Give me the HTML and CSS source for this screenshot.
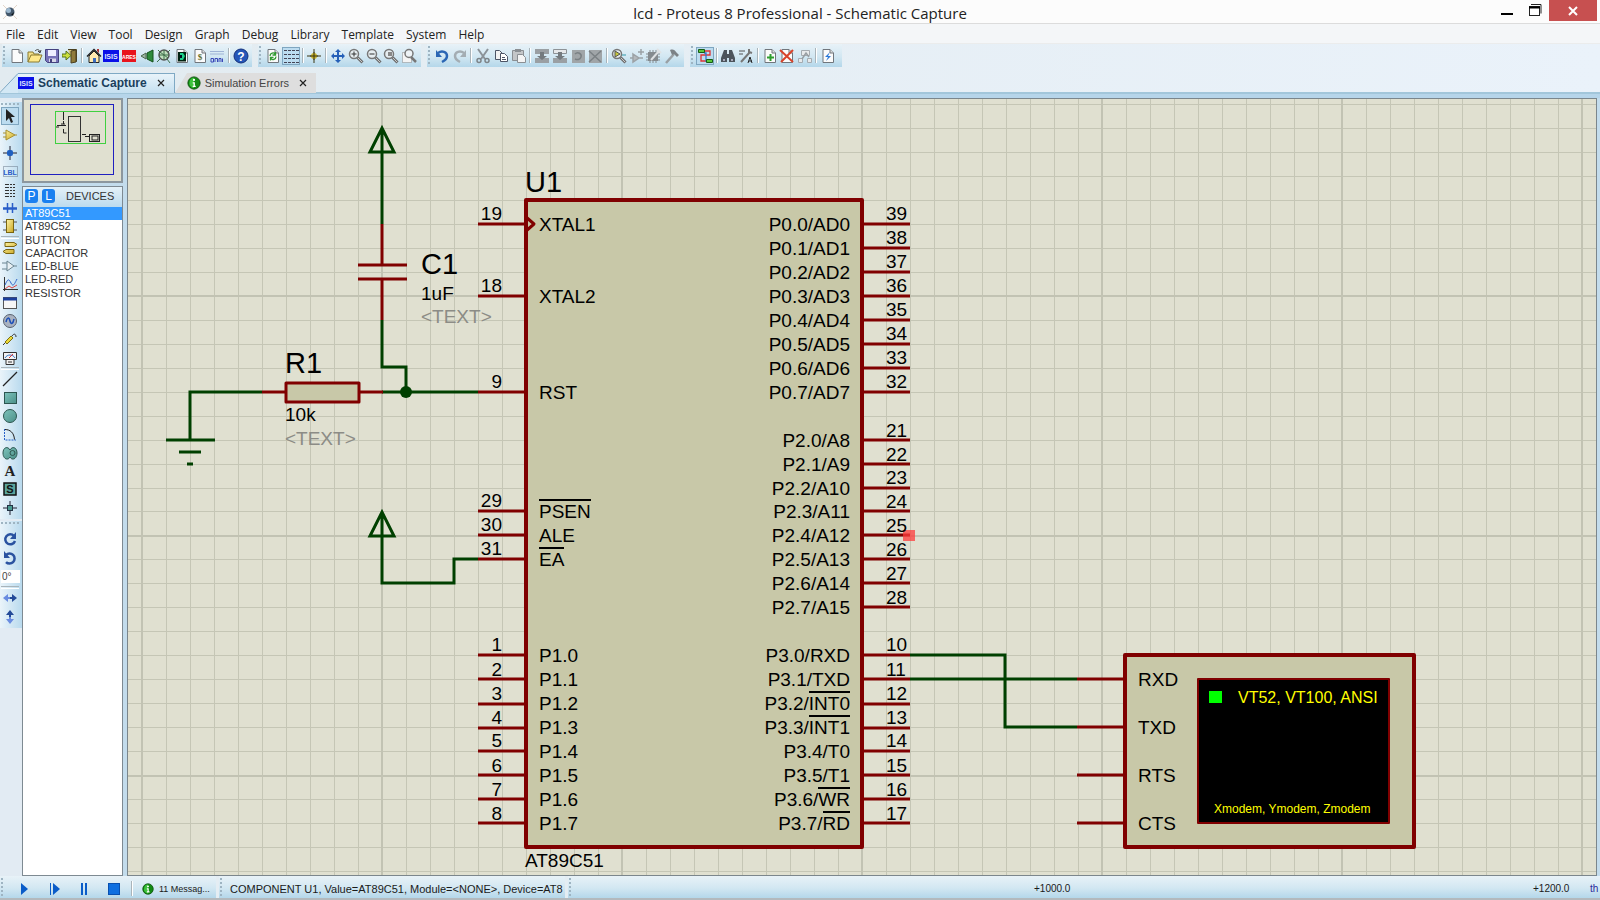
FILE: index.html
```html
<!DOCTYPE html>
<html lang="en">
<head>
<meta charset="utf-8">
<title>lcd - Proteus 8 Professional - Schematic Capture</title>
<link rel="stylesheet" href="styles.css">
</head>
<body>
<svg class="defs" width="0" height="0" aria-hidden="true">
  <defs>
    <linearGradient id="gold" x1="0" y1="0" x2="1" y2="1"><stop offset="0" stop-color="#fff6a8"/><stop offset="1" stop-color="#c9a520"/></linearGradient>
    <linearGradient id="teal" x1="0" y1="0" x2="1" y2="1"><stop offset="0" stop-color="#7fc4bc"/><stop offset="1" stop-color="#4a8f88"/></linearGradient>
    <symbol id="isis" viewBox="0 0 16 16"><rect x="0" y="2" width="16" height="12" fill="#0a10e8"/><text x="8" y="11" class="t-logo" fill="#dfe4ff">ISIS</text></symbol>
    <symbol id="info" viewBox="0 0 16 16"><circle cx="8" cy="8" r="7" fill="#128a12" stroke="#0a4d0a"/><path d="M3 6a5.500 5.500 0 0 1 5-4v12a6 6 0 0 1-5-8z" fill="#3cc23c"/><circle cx="8" cy="4.500" r="1.300" fill="#fff"/><path d="M6.500 7H9v4h1v1.500H6.500V11h1V8.500h-1z" fill="#fff"/></symbol>
    <symbol id="page" viewBox="0 0 16 16"><path d="M3 1.500h7l3.500 3.500v9.500H3z" fill="#fbfbfb" stroke="#70767c"/><path d="M10 1.500V5h3.500" fill="#ddd" stroke="#70767c"/></symbol>
    <symbol id="lens" viewBox="0 0 16 16"><path d="M9.500 9.500l5 5" stroke="#6e6e6e" stroke-width="3"/><path d="M10 10l4 4" stroke="#c9c9c9"/><circle cx="6" cy="6" r="4.500" fill="#e6edf0" stroke="#777" stroke-width="1.500"/></symbol>
  </defs>
</svg>

<div class="app">
<header class="titlebar">
  <svg class="ic app-icon" viewBox="0 0 16 16"><path d="M1 1l4 4M15 1l-4 4M1 15l4-4M15 15l-4-4" stroke="#e3d5c8"/><circle cx="8" cy="8" r="4.500" fill="#42566a"/><circle cx="6.500" cy="6.500" r="2.500" fill="#9cb8cf"/><path d="M9 11l3-3-1 3z" fill="#111"/></svg>
  <h1 class="title">lcd - Proteus 8 Professional - Schematic Capture</h1>
  <div class="winbtns">
    <button class="win" aria-label="Minimize"><svg width="14" height="14" viewBox="0 0 14 14"><path d="M1 11h12" stroke="#000" stroke-width="2"/></svg></button>
    <button class="win" aria-label="Restore"><svg width="14" height="14" viewBox="0 0 14 14"><path d="M3 1.500h10v9" fill="none" stroke="#222" /><rect x="1.500" y="3.500" width="10" height="9" fill="#fff" stroke="#222"/><path d="M1 4.500h11" stroke="#000" stroke-width="2"/></svg></button>
    <button class="win close" aria-label="Close"><svg width="10" height="10" viewBox="0 0 10 10"><path d="M1 1l8 8M9 1l-8 8" stroke="#fff" stroke-width="2"/></svg></button>
  </div>
</header>

<nav class="menu">
  <button>File</button><button>Edit</button><button>View</button><button>Tool</button><button>Design</button><button>Graph</button><button>Debug</button><button>Library</button><button>Template</button><button>System</button><button>Help</button>
</nav>

<div class="toolbars">
  <div class="strip s-file">
    <button class="tb" aria-label="New"><svg class="ic"><use href="#page"/></svg></button>
    <button class="tb" aria-label="Open"><svg class="ic" viewBox="0 0 16 16"><path d="M1 14V4h5l1 2h5v3" fill="#f3e08a" stroke="#8a7a30"/><path d="M1 14l3-7h11l-3 7z" fill="#ffe98a" stroke="#8a7a30"/><path d="M8 3c2-2 4-2 5 1m1-2l-1 3-2-2" fill="none" stroke="#444"/></svg></button>
    <button class="tb" aria-label="Save"><svg class="ic" viewBox="0 0 16 16"><path d="M1.500 1.500h13v13h-11l-2-2z" fill="#7672b8" stroke="#44407e"/><path d="M4 2h8v6H4z" fill="#eef"/><path d="M5 10.500h7V14H5z" fill="#d7d7e8"/><path d="M6 11h2v3H6z" fill="#44407e"/></svg></button>
    <button class="tb" aria-label="Close project"><svg class="ic" viewBox="0 0 16 16"><path d="M6 1.500h8.500v12H10" fill="#d8c67b" stroke="#4a4020"/><path d="M9 3l5-1v12l-5 1z" fill="#8f7a3a" stroke="#4a4020"/><path d="M0 6h4V3l5 4.500L4 12V9H0z" fill="#cbe03c" stroke="#56701a"/></svg></button>
    <i class="sep"></i>
    <button class="tb" aria-label="Home"><svg class="ic" viewBox="0 0 16 16"><path d="M3 8v6.500h10V8L8 3z" fill="#ffe9b0" stroke="#222"/><path d="M1 8.500l7-7 7 7" fill="none" stroke="#222" stroke-width="1.500"/><path d="M11 1h2v4l-2-2z" fill="#a33"/><path d="M7 10h3v4.500H7z" fill="#3b6cc0"/></svg></button>
    <button class="tb" aria-label="Schematic capture"><svg class="ic"><use href="#isis"/></svg></button>
    <button class="tb" aria-label="PCB layout"><svg class="ic" viewBox="0 0 16 16"><rect x="1" y="2" width="14" height="12" fill="#e8141c"/><text x="8" y="11" class="t-logo s" fill="#fff">ARES</text></svg></button>
    <button class="tb" aria-label="3D viewer"><svg class="ic" viewBox="0 0 16 16"><path d="M8 5l6-3v12l-6-3z" fill="#2f8b3c" stroke="#14521c"/><path d="M2 8l5-3v6z" fill="#9db5a0" stroke="#4c6950"/></svg></button>
    <button class="tb" aria-label="Gerber viewer"><svg class="ic" viewBox="0 0 16 16"><circle cx="8" cy="7" r="5" fill="#bfe0bd" stroke="#555" stroke-width="1.500"/><path d="M3 7h10M8 2v10M4 4l8 6M1 14l3-3M14 15l-3-4M2 2l2 2M14 2l-2 2" stroke="#3e6f4a"/></svg></button>
    <button class="tb" aria-label="Design explorer"><svg class="ic"><use href="#page"/></svg><svg class="ic over" viewBox="0 0 16 16"><path d="M4 4h8v9.500H4z" fill="#021"/><path d="M6 5h3l2 3-2 4H6z" fill="#1fd08a"/><path d="M6 7h2v3H6z" fill="#012"/></svg></button>
    <button class="tb" aria-label="Bill of materials"><svg class="ic"><use href="#page"/></svg><svg class="ic over" viewBox="0 0 16 16"><text x="8" y="12" class="t-bom">$</text></svg></button>
    <button class="tb" aria-label="Source code"><svg class="ic" viewBox="0 0 16 16"><path d="M1 3.500h14M1 6h14" stroke="#9fb4d6"/><path d="M2 14v-3.500h2.500V14zM6 14v-3.500h2.500V14M10 14v-3.500h2V14M13.500 14v-3.500" fill="none" stroke="#3a49b8"/></svg></button>
    <i class="sep"></i>
    <button class="tb" aria-label="Help"><svg class="ic" viewBox="0 0 16 16"><circle cx="8" cy="8" r="7" fill="#2456b8" stroke="#13307a"/><text x="8" y="12.500" class="t-help">?</text></svg></button>
  </div>

  <div class="strip s-view">
    <button class="tb" aria-label="Redraw"><svg class="ic"><use href="#page"/></svg><svg class="ic over" viewBox="0 0 16 16"><path d="M5 8c0-3 4-4 5-2m.5-2v3h-3M11 8.500c0 3-4 4-5 2m-.5 2v-3h3" fill="none" stroke="#2f9a2f" stroke-width="1.300"/></svg></button>
    <button class="tb on" aria-label="Toggle grid"><svg class="ic" viewBox="0 0 16 16"><path d="M1 2.500h15M1 6.500h15M1 10.500h15M1 14.500h15" stroke="#445" stroke-dasharray="1 1"/><path d="M2.500 2v14M6.500 2v14M10.500 2v14M14.500 2v14" stroke="#445" stroke-dasharray="1 3"/></svg></button>
    <i class="sep"></i>
    <button class="tb" aria-label="Origin"><svg class="ic" viewBox="0 0 16 16"><path d="M8 1v14M1 8h14" stroke="#3a3612"/><circle cx="8" cy="8" r="3" fill="#c9b22a"/><path d="M8 4v8M4 8h8" stroke="#3a3612"/></svg></button>
    <i class="sep"></i>
    <button class="tb" aria-label="Pan"><svg class="ic" viewBox="0 0 16 16"><path d="M8 1l3 3H9v3h3V5l3 3-3 3V9H9v3h2l-3 3-3-3h2V9H4v2L1 8l3-3v2h3V4H5z" fill="#2560b8"/></svg></button>
    <button class="tb" aria-label="Zoom in"><svg class="ic"><use href="#lens"/></svg><svg class="ic over" viewBox="0 0 16 16"><path d="M6 3.500v5M3.500 6h5" stroke="#333"/></svg></button>
    <button class="tb" aria-label="Zoom out"><svg class="ic"><use href="#lens"/></svg><svg class="ic over" viewBox="0 0 16 16"><path d="M3.500 6h5" stroke="#333"/></svg></button>
    <button class="tb" aria-label="Zoom all"><svg class="ic"><use href="#lens"/></svg><svg class="ic over" viewBox="0 0 16 16"><path d="M4 4h4v4H4z" fill="#888"/></svg></button>
    <button class="tb" aria-label="Zoom area"><svg class="ic" viewBox="0 0 16 16"><rect x="1.500" y="4.500" width="9" height="10" fill="#f4f4f4" stroke="#888" stroke-dasharray="1 1"/><path d="M10 9l5 5" stroke="#777" stroke-width="2.500"/><circle cx="8" cy="5.500" r="4" fill="#eef3f6" stroke="#777" stroke-width="1.500"/></svg></button>
  </div>

  <div class="strip s-edit">
    <button class="tb" aria-label="Undo"><svg class="ic" viewBox="0 0 16 16"><path d="M4 5c4-3 9-1 9 3 0 3-3 5-5 6" fill="none" stroke="#2b66b4" stroke-width="2.500"/><path d="M2 2v7h6z" fill="#2b66b4"/></svg></button>
    <button class="tb" aria-label="Redo"><svg class="ic" viewBox="0 0 16 16"><path d="M12 5C8 2 3 4 3 8c0 3 3 5 5 6" fill="none" stroke="#a4adb3" stroke-width="2.500"/><path d="M14 2v7H8z" fill="#a4adb3"/></svg></button>
    <i class="sep"></i>
    <button class="tb" aria-label="Cut"><svg class="ic" viewBox="0 0 16 16"><path d="M3 1l7 10M13 1L6 11" stroke="#8c9399" stroke-width="2"/><circle cx="4" cy="12.500" r="2" fill="none" stroke="#7d8489" stroke-width="1.500"/><circle cx="12" cy="12.500" r="2" fill="none" stroke="#7d8489" stroke-width="1.500"/></svg></button>
    <button class="tb" aria-label="Copy"><svg class="ic" viewBox="0 0 16 16"><path d="M2.500 2.500h4l3 3v6h-7z" fill="#f2f2f2" stroke="#4d5566"/><path d="M7.500 5.500h4l3 3v5h-7z" fill="#fff" stroke="#4d5566"/><path d="M9 9.500h3M9 11.500h4" stroke="#4d5566"/></svg></button>
    <button class="tb" aria-label="Paste"><svg class="ic" viewBox="0 0 16 16"><path d="M1.500 2.500h11v10h-11z" fill="#c4c6c8" stroke="#8b8f93"/><path d="M4 1h6v3H4z" fill="#8b8f93"/><path d="M6.500 6.500h5l3 3v5h-8z" fill="#f4f4f4" stroke="#8b8f93"/></svg></button>
    <i class="sep"></i>
    <button class="tb" aria-label="Block copy"><svg class="ic" viewBox="0 0 16 16"><path d="M1 1h14v5H1zM1 10h14v5H1z" fill="#9a9fa3"/><path d="M6 4h4v4h3l-5 4-5-4h3z" fill="#747a7e"/></svg></button>
    <button class="tb" aria-label="Block move"><svg class="ic" viewBox="0 0 16 16"><path d="M1.500 1.500h13v4h-13z" fill="#e6e8ea" stroke="#8d9296"/><path d="M1 10h14v5H1z" fill="#9a9fa3"/><path d="M6 4h4v4h3l-5 4-5-4h3z" fill="#747a7e"/></svg></button>
    <button class="tb" aria-label="Block rotate"><svg class="ic" viewBox="0 0 16 16"><path d="M2 2h13v13H2z" fill="#a0a5a8"/><path d="M5 6c3-3 7 0 6 3s-4 3-6 2" fill="none" stroke="#7a8084" stroke-width="1.500"/></svg></button>
    <button class="tb" aria-label="Block delete"><svg class="ic" viewBox="0 0 16 16"><path d="M2 2h13v13H2z" fill="#a0a5a8"/><path d="M2 3l12 11M14 3L2 14" stroke="#7a8084" stroke-width="1.500"/></svg></button>
    <i class="sep"></i>
    <button class="tb" aria-label="Pick parts"><svg class="ic"><use href="#lens"/></svg><svg class="ic over" viewBox="0 0 16 16"><path d="M4 3l5 3-5 3z" fill="#c8c83c" stroke="#555"/><path d="M11 7h4" stroke="#39a"/></svg></button>
    <button class="tb" aria-label="Make device"><svg class="ic" viewBox="0 0 16 16"><path d="M4 6l6 4-6 4zM1 10h3M10 10h4M12 1v6M9 4h6" fill="#b4b9bd" stroke="#9ca2a6" stroke-width="1.500"/></svg></button>
    <button class="tb" aria-label="Packaging tool"><svg class="ic" viewBox="0 0 16 16"><path d="M2 4h10v9H2z" fill="#858b8f"/><path d="M4 2v13M7 2v13M10 2v13M0 6h14M0 9h14M0 12h14" stroke="#858b8f"/><path d="M5 12l8-9M11 1l4 4" stroke="#dfe2e4" stroke-width="2"/></svg></button>
    <button class="tb" aria-label="Decompose"><svg class="ic" viewBox="0 0 16 16"><path d="M2 15l8-9" stroke="#9aa0a4" stroke-width="2.500"/><path d="M6 2c3-1 5 0 6 2l3 3-2 2-3-3-2 1z" fill="#7c8286"/></svg></button>
  </div>

  <div class="strip s-tools">
    <button class="tb on" aria-label="Wire autorouter"><svg class="ic" viewBox="0 0 16 16"><path d="M7 3h6v4H4v6h6" fill="none" stroke="#d33" stroke-width="1.300"/><path d="M7 5h2v8h2" fill="none" stroke="#37c" stroke-width="1.300"/><path d="M1.500 1.500h6v3h-6zM9.500 11.500h6v3h-6z" fill="#5cc83c" stroke="#145c14"/></svg></button>
    <i class="sep"></i>
    <button class="tb" aria-label="Search and tag"><svg class="ic" viewBox="0 0 16 16"><path d="M4 2h3v4h2V2h3l3 8v4H9v-4H7v4H1v-4z" fill="#4c545c"/><path d="M3 11h2v2H3zM11 11h2v2h-2z" fill="#aab"/></svg></button>
    <button class="tb" aria-label="Property assignment"><svg class="ic" viewBox="0 0 16 16"><path d="M1 3h6M1 6h4" stroke="#555"/><path d="M3 14l9-10M11 1v3l3 1" stroke="#777" stroke-width="2" fill="none"/><path d="M10 15l2-6 2 6M11 13h3" fill="none" stroke="#222"/></svg></button>
    <i class="sep"></i>
    <button class="tb" aria-label="New sheet"><svg class="ic"><use href="#page"/></svg><svg class="ic over" viewBox="0 0 16 16"><path d="M8.500 6v7M5 9.500h7" stroke="#2e9e2e" stroke-width="2"/></svg></button>
    <button class="tb" aria-label="Remove sheet"><svg class="ic"><use href="#page"/></svg><svg class="ic over" viewBox="0 0 16 16"><path d="M1 2l13 12M14 2L2 14" stroke="#d8432b" stroke-width="2"/></svg></button>
    <button class="tb" aria-label="Exit to parent sheet"><svg class="ic" viewBox="0 0 16 16"><path d="M4.500 2.500h8v5h-8zM1.500 10.500h4v4h-4zM10.500 10.500h4v4h-4z" fill="#e8eaec" stroke="#a5abb0"/><path d="M5 11l4-6 3 4" fill="none" stroke="#979da2" stroke-width="1.500"/></svg></button>
    <i class="sep"></i>
    <button class="tb" aria-label="Electrical rule check"><svg class="ic"><use href="#page"/></svg><svg class="ic over" viewBox="0 0 16 16"><path d="M10 4L5 9h3l-2 4 5-5H8z" fill="#2a78d8"/></svg></button>
  </div>
</div>

<div class="tabs">
  <div class="tab active">
    <svg class="slant" viewBox="0 0 18 20" preserveAspectRatio="none"><path d="M0 20L18 0v20z" fill="#d3e8f5"/><path d="M0 19.500L18 .5" stroke="#7fa9c4"/></svg>
    <button class="tabname"><svg class="ic"><use href="#isis"/></svg>Schematic Capture</button>
    <button class="x" aria-label="Close tab"><svg width="8" height="8" viewBox="0 0 8 8"><path d="M1 1l6 6M7 1L1 7" stroke="#222" stroke-width="1.200"/></svg></button>
  </div>
  <div class="tab">
    <svg class="slant" viewBox="0 0 18 20" preserveAspectRatio="none"><path d="M0 20L12 0h6v20z" fill="#dedede"/></svg>
    <button class="tabname"><svg class="ic"><use href="#info"/></svg>Simulation Errors</button>
    <button class="x" aria-label="Close tab"><svg width="8" height="8" viewBox="0 0 8 8"><path d="M1 1l6 6M7 1L1 7" stroke="#222" stroke-width="1.200"/></svg></button>
  </div>
</div>

<main class="work">
  <aside class="modes">
    <div class="modebox main-modes">
      <button class="md on" aria-label="Selection"><svg class="ic" viewBox="0 0 16 16"><path d="M4 1v12l3-3 2 5 2-1-2-5h4z" fill="#222"/></svg></button>
      <button class="md" aria-label="Component"><svg class="ic" viewBox="0 0 16 16"><path d="M4 3l9 5-9 5zM1 6h3M1 10h3M13 8h2" fill="url(#gold)" stroke="#a89030"/></svg></button>
      <button class="md" aria-label="Junction"><svg class="ic" viewBox="0 0 16 16"><path d="M8 1v14M1 8h14" stroke="#223"/><rect x="5" y="5" width="6" height="6" rx="2" fill="#1f5fc0"/></svg></button>
      <button class="md" aria-label="Wire label"><svg class="ic" viewBox="0 0 16 16"><rect x="1.500" y="3.500" width="14" height="10" fill="none" stroke="#678" stroke-dasharray="1 1"/><text x="8" y="11.500" class="t-lbl">LBL</text></svg></button>
      <button class="md" aria-label="Text script"><svg class="ic" viewBox="0 0 16 16"><path d="M3 2.500h10M3 5.500h10M3 8.500h10M3 11.500h10M3 14.500h10" stroke="#333" stroke-dasharray="4 1 2 1"/></svg></button>
      <button class="md" aria-label="Bus"><svg class="ic" viewBox="0 0 16 16"><path d="M1 8.500h14" stroke="#2a5ec8" stroke-width="2.500"/><path d="M5.500 3v10M10.500 3v10" stroke="#2a5ec8" stroke-width="1.500"/></svg></button>
      <button class="md" aria-label="Subcircuit"><svg class="ic" viewBox="0 0 16 16"><path d="M1 4h14M1 12h14" stroke="#555"/><rect x="4.500" y="1.500" width="7" height="13" fill="url(#gold)" stroke="#7a6510"/></svg></button>
      <i class="hsep"></i>
      <button class="md" aria-label="Terminals"><svg class="ic" viewBox="0 0 16 16"><path d="M3 2.500h9l3 2-3 2H3zM12 9.500H4l-3 2 3 2h8z" fill="url(#gold)" stroke="#7a6510"/></svg></button>
      <button class="md" aria-label="Device pins"><svg class="ic" viewBox="0 0 16 16"><path d="M5 3l7 5-7 5zM0 5h5M0 11h5M12 8h3" fill="#e8f0f4" stroke="#6b8490"/></svg></button>
      <button class="md" aria-label="Graph"><svg class="ic" viewBox="0 0 16 16"><path d="M2.500 1v14M1 13.500h15" stroke="#333"/><path d="M3 9c3-7 4-6 6-2s3 2 6-4" fill="none" stroke="#2d62c8"/><path d="M3 13l4-3 3 2 5-3" fill="none" stroke="#d44"/></svg></button>
      <button class="md" aria-label="Active popup"><svg class="ic" viewBox="0 0 16 16"><rect x="1.500" y="2.500" width="13" height="11" fill="#f6f6f6" stroke="#555"/><path d="M1 4h14" stroke="#1c3f9c" stroke-width="3"/></svg></button>
      <button class="md" aria-label="Generator"><svg class="ic" viewBox="0 0 16 16"><circle cx="8" cy="8" r="6.500" fill="#a9b2c0" stroke="#59616e"/><path d="M4 9c1-5 3-5 4-1s3 3 4-2" fill="none" stroke="#1c4fb8" stroke-width="1.500"/></svg></button>
      <button class="md" aria-label="Probe"><svg class="ic" viewBox="0 0 16 16"><path d="M1 14l3-3" stroke="#333"/><path d="M3 11l6-6 2 2-6 6z" fill="#ecd838" stroke="#7d7010"/><path d="M10 5c2-3 4-2 4 1" fill="none" stroke="#333"/></svg></button>
      <button class="md" aria-label="Instruments"><svg class="ic" viewBox="0 0 16 16"><path d="M1.500 2.500h13v7h-13zM4 9.500h8v5H4z" fill="#f2f2f2" stroke="#333"/><path d="M3 8c2-4 8-4 10 0" fill="none" stroke="#37c"/><path d="M7 8l4-4" stroke="#d33"/><path d="M6 12h4" stroke="#333"/></svg></button>
      <i class="hsep"></i>
      <button class="md" aria-label="Line"><svg class="ic" viewBox="0 0 16 16"><path d="M1 15L15 1" stroke="#222" stroke-width="1.300"/></svg></button>
      <button class="md" aria-label="Box"><svg class="ic" viewBox="0 0 16 16"><rect x="2.500" y="2.500" width="12" height="11" fill="url(#teal)" stroke="#2d5650"/></svg></button>
      <button class="md" aria-label="Circle"><svg class="ic" viewBox="0 0 16 16"><circle cx="8" cy="8" r="6.500" fill="url(#teal)" stroke="#2d5650"/></svg></button>
      <button class="md" aria-label="Arc"><svg class="ic" viewBox="0 0 16 16"><path d="M2.500 3v11H14" fill="none" stroke="#2560c8" stroke-dasharray="2 1"/><path d="M3 3.500c5 0 9 3 9.500 10" fill="none" stroke="#222"/></svg></button>
      <button class="md" aria-label="Path"><svg class="ic" viewBox="0 0 16 16"><path d="M8 5C6 1 1 2 1 8s5 8 7 4c2 4 7 2 7-4s-5-7-7-3z" fill="url(#teal)" stroke="#2d5650"/><circle cx="10.500" cy="8" r="2.500" fill="none" stroke="#2d5650"/></svg></button>
      <button class="md" aria-label="Text"><svg class="ic" viewBox="0 0 16 16"><text x="8" y="13" class="t-a">A</text></svg></button>
      <button class="md" aria-label="Symbols"><svg class="ic" viewBox="0 0 16 16"><rect x="2" y="2" width="12" height="12" fill="#5aa59c" stroke="#111" stroke-width="1.500"/><text x="8" y="12" class="t-s">S</text></svg></button>
      <button class="md" aria-label="Markers"><svg class="ic" viewBox="0 0 16 16"><path d="M8 1v14M1 8h14" stroke="#223"/><rect x="5.500" y="5.500" width="5" height="5" fill="#4a9a90" stroke="#234"/></svg></button>
    </div>
    <div class="modebox rot-modes">
      <button class="md" aria-label="Rotate clockwise"><svg class="ic" viewBox="0 0 16 16"><path d="M12 5a5 5 0 1 0 1 5" fill="none" stroke="#2a52a0" stroke-width="2.500"/><path d="M14 1v7H8z" fill="#2a52a0"/></svg></button>
      <button class="md" aria-label="Rotate anticlockwise"><svg class="ic" viewBox="0 0 16 16"><path d="M4 5a5 5 0 1 1 0 7" fill="none" stroke="#2a52a0" stroke-width="2.500"/><path d="M2 1v7h6z" fill="#2a52a0"/></svg></button>
      <input class="angle" type="text" value="0°" aria-label="Rotation angle">
      <i class="hsep"></i>
      <button class="md" aria-label="Mirror horizontally"><svg class="ic" viewBox="0 0 16 16"><path d="M1 8l5-4v3h2v2H6v3z" fill="#6a8ce0"/><path d="M15 8l-5-4v3H8v2h2v3z" fill="#234a98"/></svg></button>
      <button class="md" aria-label="Mirror vertically"><svg class="ic" viewBox="0 0 16 16"><path d="M8 1l4 5H9v2H7V6H4z" fill="#234a98"/><path d="M8 15l4-5H9V8H7v2H4z" fill="#6a8ce0"/></svg></button>
    </div>
  </aside>

  <section class="side">
    <div class="preview">
      <svg width="96" height="81" viewBox="0 0 96 81" aria-hidden="true">
        <rect x="6.500" y="4.500" width="83" height="70" fill="none" stroke="#2020c0"/>
        <rect x="31.500" y="11.500" width="50" height="32" fill="none" stroke="#40d040"/>
        <rect x="44.500" y="16.500" width="12" height="25" fill="none" stroke="#333"/>
        <path d="M39.500 12v8M33 25.500h9M32 27h3M37 24h4M39.500 21v3M39.500 29v4h3M58 34.500h4M61 36.500h4" stroke="#222" fill="none"/>
        <rect x="65.500" y="34.500" width="10" height="7" fill="none" stroke="#222"/><rect x="68" y="36" width="6" height="4" fill="none" stroke="#222"/>
      </svg>
    </div>
    <div class="devices">
      <div class="devhead"><button class="pl">P</button><button class="pl">L</button><h2>DEVICES</h2></div>
      <ul class="devlist">
        <li class="sel">AT89C51</li><li>AT89C52</li><li>BUTTON</li><li>CAPACITOR</li><li>LED-BLUE</li><li>LED-RED</li><li>RESISTOR</li>
      </ul>
    </div>
  </section>

  <section class="sheet">
    <svg class="schematic" role="img" aria-label="Schematic">
      <defs>
        <pattern id="g1" width="24" height="24" x="142" y="104" patternUnits="userSpaceOnUse"><path d="M0 .5h24M.5 0v24" stroke="#c5c6b5"/></pattern>
        <pattern id="g2" width="24" height="24" x="142" y="511" patternUnits="userSpaceOnUse"><path d="M0 .5h24M.5 0v24" stroke="#c5c6b5"/></pattern>
        <pattern id="m" width="240" height="240" x="141" y="55" patternUnits="userSpaceOnUse"><path d="M0 1h240M1 0v240" stroke="#c2c3b3" stroke-width="2"/></pattern>
      </defs>
      <g transform="translate(-128 -99)">
        <rect x="127" y="98" width="3000" height="402" fill="url(#g1)"/>
        <rect x="127" y="500" width="3000" height="2000" fill="url(#g2)"/>
        <rect x="127" y="98" width="3000" height="2400" fill="url(#m)"/>

        <g class="wire">
          <path d="M382 224V129M370 152l12-24 12 24z"/>
          <path d="M382 320v47h24v25M382 392h96"/>
          <path d="M262 392h-72v48M166 440h49M179 452h22M187 464h6"/>
          <path d="M382 512v71h72v-24h24M370 536l12-24 12 24z"/>
          <path d="M910 655h95v72h72M910 679h167"/>
        </g>
        <circle cx="406" cy="392" r="6" fill="#004000"/>

        <g class="part">
          <rect x="526" y="200" width="336" height="647" stroke-width="4"/>
          <rect x="286" y="383" width="73" height="19"/>
          <rect x="1125" y="655" width="289" height="192" stroke-width="4"/>
          <rect x="1198" y="679" width="191" height="144" stroke-width="2" class="screen"/>
          <path d="M526 217l8 7-8 7" fill="none"/>
          <path d="M382 224v41M358 265h49M358 279h49M382 279v41M262 392h24M359 392h24"/>
          <path d="M478 224h48M478 296h48M478 392h48M478 511h48M478 535h48M478 559h48"/>
          <path d="M478 655h48M478 679h48M478 704h48M478 728h48M478 751h48M478 775h48M478 799h48M478 823h48"/>
          <path d="M862 224h48M862 248h48M862 272h48M862 296h48M862 320h48M862 344h48M862 368h48M862 392h48"/>
          <path d="M862 440h48M862 464h48M862 488h48M862 511h48M862 535h48M862 559h48M862 583h48M862 607h48"/>
          <path d="M862 655h48M862 679h48M862 704h48M862 728h48M862 751h48M862 775h48M862 799h48M862 823h48"/>
          <path d="M1077 679h48M1077 727h48M1077 775h48M1077 823h48"/>
        </g>
        <rect x="903" y="530" width="12" height="11" fill="#ff3c3c" fill-opacity=".75"/>
        <rect x="1209" y="691" width="13" height="12" fill="#00ff00"/>

        <g class="ref"><text x="525" y="192">U1</text><text x="421" y="274">C1</text><text x="285" y="373">R1</text></g>
        <g class="lab">
          <text x="421" y="300">1uF</text><text x="285" y="421">10k</text><text x="525" y="867">AT89C51</text>
          <text x="421" y="323" class="dim">&lt;TEXT&gt;</text><text x="285" y="445" class="dim">&lt;TEXT&gt;</text>
          <text x="539" y="231">XTAL1</text><text x="539" y="303">XTAL2</text><text x="539" y="399">RST</text>
          <text x="539" y="518">PSEN</text><text x="539" y="542">ALE</text><text x="539" y="566">EA</text>
          <text x="539" y="662">P1.0</text><text x="539" y="686">P1.1</text><text x="539" y="710">P1.2</text><text x="539" y="734">P1.3</text><text x="539" y="758">P1.4</text><text x="539" y="782">P1.5</text><text x="539" y="806">P1.6</text><text x="539" y="830">P1.7</text>
          <text x="1138" y="686">RXD</text><text x="1138" y="734">TXD</text><text x="1138" y="782">RTS</text><text x="1138" y="830">CTS</text>
          <text x="886" y="220">39</text><text x="886" y="244">38</text><text x="886" y="268">37</text><text x="886" y="292">36</text><text x="886" y="316">35</text><text x="886" y="340">34</text><text x="886" y="364">33</text><text x="886" y="388">32</text>
          <text x="886" y="437">21</text><text x="886" y="461">22</text><text x="886" y="484">23</text><text x="886" y="508">24</text><text x="886" y="532">25</text><text x="886" y="556">26</text><text x="886" y="580">27</text><text x="886" y="604">28</text>
          <text x="886" y="651">10</text><text x="886" y="676">11</text><text x="886" y="700">12</text><text x="886" y="724">13</text><text x="886" y="747">14</text><text x="886" y="772">15</text><text x="886" y="796">16</text><text x="886" y="820">17</text>
        </g>
        <g class="lab end">
          <text x="502" y="220">19</text><text x="502" y="292">18</text><text x="502" y="388">9</text><text x="502" y="507">29</text><text x="502" y="531">30</text><text x="502" y="555">31</text>
          <text x="502" y="651">1</text><text x="502" y="676">2</text><text x="502" y="700">3</text><text x="502" y="724">4</text><text x="502" y="747">5</text><text x="502" y="772">6</text><text x="502" y="796">7</text><text x="502" y="820">8</text>
          <text x="850" y="231">P0.0/AD0</text><text x="850" y="255">P0.1/AD1</text><text x="850" y="279">P0.2/AD2</text><text x="850" y="303">P0.3/AD3</text><text x="850" y="327">P0.4/AD4</text><text x="850" y="351">P0.5/AD5</text><text x="850" y="375">P0.6/AD6</text><text x="850" y="399">P0.7/AD7</text>
          <text x="850" y="447">P2.0/A8</text><text x="850" y="471">P2.1/A9</text><text x="850" y="495">P2.2/A10</text><text x="850" y="518">P2.3/A11</text><text x="850" y="542">P2.4/A12</text><text x="850" y="566">P2.5/A13</text><text x="850" y="590">P2.6/A14</text><text x="850" y="614">P2.7/A15</text>
          <text x="850" y="662">P3.0/RXD</text><text x="850" y="686">P3.1/TXD</text><text x="850" y="710">P3.2/INT0</text><text x="850" y="734">P3.3/INT1</text><text x="850" y="758">P3.4/T0</text><text x="850" y="782">P3.5/T1</text><text x="850" y="806">P3.6/WR</text><text x="850" y="830">P3.7/RD</text>
        </g>
        <path d="M539 500h52M539 548h25M809 692h41M809 716h41M818 788h32M823 812h27" stroke="#000" stroke-width="2"/>
        <g fill="#ffff00"><text x="1238" y="703" class="vt">VT52, VT100, ANSI</text><text x="1214" y="813" class="xm">Xmodem, Ymodem, Zmodem</text></g>
      </g>
    </svg>
  </section>
</main>

<footer class="status">
  <div class="strip st-play">
    <button class="pb" aria-label="Play"><svg class="ic" viewBox="0 0 16 16"><path d="M5 2l7 6-7 6z" fill="#0a5cc8"/></svg></button>
    <button class="pb" aria-label="Step"><svg class="ic" viewBox="0 0 16 16"><path d="M4.500 2v12" stroke="#0a5cc8"/><path d="M7 2l7 6-7 6z" fill="#0a5cc8"/></svg></button>
    <button class="pb" aria-label="Pause"><svg class="ic" viewBox="0 0 16 16"><path d="M6 2v12M10 2v12" stroke="#0a5cc8" stroke-width="2"/></svg></button>
    <button class="pb" aria-label="Stop"><svg class="ic" viewBox="0 0 16 16"><rect x="2.500" y="2.500" width="11" height="11" fill="#0f6fe0" stroke="#0850b0"/></svg></button>
    <i class="sep"></i>
    <button class="msg"><svg class="ic small"><use href="#info"/></svg>11 Messag...</button>
  </div>
  <div class="strip st-text"><span>COMPONENT U1, Value=AT89C51, Module=&lt;NONE&gt;, Device=AT8</span></div>
  <div class="strip st-coord"><span class="cx">+1000.0</span><span class="cy">+1200.0</span><span class="th">th</span></div>
</footer>
</div>
</body>
</html>
```
FILE: styles.css
```css
* { box-sizing: border-box; }
html, body { height: 100%; }
body { margin: 0; overflow: hidden; font-family: "Liberation Sans", Arial, sans-serif; font-size: 11px; color: #1a1a1a; background: #e4edf3; }
button { margin: 0; padding: 0; border: 0; background: none; font: inherit; color: inherit; }
.defs { position: absolute; }
.ic { width: 16px; height: 16px; flex: none; display: block; }
.app { display: flex; flex-direction: column; height: 100vh; border-bottom: 2px solid #b3b9bd; }

.titlebar { display: flex; align-items: flex-start; height: 24px; background: #fcfcfc; border-bottom: 1px solid #dcdcdc; padding-right: 3px; }
.app-icon { margin: 4px 0 0 2px; }
.title { flex: 1; margin: 0; padding-left: 89px; font: 15px/26px "Open Sans", "Noto Sans", sans-serif; text-align: center; color: #222; }
.winbtns { display: flex; }
.win { width: 28px; height: 20px; display: flex; align-items: center; justify-content: center; }
.win.close { width: 48px; height: 21px; background: #c75050; }

.menu { display: flex; gap: 12px; height: 20px; padding-left: 6px; background: #f4f6f8; font: 12px/22px "Open Sans", "Noto Sans", sans-serif; color: #222; border-bottom: 1px solid #ebecec; }

.toolbars { display: flex; gap: 6px; padding: 0 0 0 2px; height: 28px; background: linear-gradient(90deg, #e2ebf0, #eaf2fa); }
.strip { position: relative; display: flex; align-items: center; height: 23px; padding-left: 6px; background: linear-gradient(#e8f2f8, #d2e7f2 55%, #b4d7ea); }
.strip::before { content: ""; position: absolute; left: 1px; top: 2px; bottom: 2px; width: 2px; background: repeating-linear-gradient(#9eb4c2 0 2px, transparent 2px 4px); }
.s-file { width: 250px; padding-right: 2px; }
.s-view { width: 163px; padding-right: 3px; }
.s-edit { width: 257px; padding-right: 3px; }
.s-tools { width: 152px; padding-right: 5px; }
.tb { position: relative; flex: 1; height: 18px; display: flex; align-items: center; justify-content: center; }
.tb.on, .md.on { background: #bcdcf0; outline: 1px solid #7fa6c0; outline-offset: -1px; }
.over { position: absolute; left: 1px; top: 1px; }
.sep { flex: 0 0 6px; height: 15px; background: linear-gradient(90deg, transparent 2px, #a9b4ba 2px 3px, #fff 3px 4px, transparent 4px); }

.tabs { display: flex; height: 26px; padding-bottom: 5px; background: linear-gradient(90deg, #e2ebf0, #eaf2fa); box-shadow: inset 0 -4px #b6d5ea, inset 0 -6px #a2c6da; }
.tab { display: flex; align-items: center; height: 21px; color: #444; }
.tab > .tabname { display: flex; align-items: center; gap: 4px; height: 20px; padding-right: 10px; background: #dedede; }
.tab > .x { height: 20px; padding-right: 9px; background: #dedede; display: flex; align-items: center; }
.tab .slant { width: 18px; height: 20px; flex: none; }
.tab:not(.active) .slant { margin-right: -6px; }
.tab:not(.active) .ic { width: 14px; height: 14px; }
.tab.active { font-weight: bold; font-size: 12px; color: #1b3f5c; }
.tab.active > .tabname, .tab.active > .x { background: linear-gradient(#e8f3fa, #c5e0f0); border-top: 1px solid #7fa9c4; }
.tab.active > .x { border-right: 1px solid #7fa9c4; }

.work { flex: 1; min-height: 0; display: flex; background: #c3dcec; padding-right: 3px; }
.modes { width: 22px; background: #e2ebf3; padding-top: 4px; display: flex; flex-direction: column; gap: 2px; }
.modebox { position: relative; width: 22px; padding: 5px 3px 2px 1px; display: flex; flex-direction: column; background: linear-gradient(90deg, #eaf4fa, #b9daee); }
.modebox::before { content: ""; position: absolute; left: 1px; right: 1px; top: 1px; height: 2px; background: repeating-linear-gradient(90deg, #9eb4c2 0 2px, transparent 2px 4px); }
.main-modes { height: 417px; }
.rot-modes { height: 107px; padding-top: 9px; }
.md { flex: 1; min-height: 0; display: flex; align-items: center; justify-content: center; }
.hsep { height: 3px; border-top: 1px solid #a9b4ba; border-bottom: 1px solid #fff; }
.angle { width: 19px; height: 13px; margin: 3px 0; padding: 0 1px; border: 0; background: #fff; font: 10px "Liberation Sans", Arial, sans-serif; color: #444; }

.side { width: 101px; display: flex; flex-direction: column; gap: 3px; }
.preview { height: 85px; background: #e0e0d0; border: 2px solid #8c979e; }
.preview svg { display: block; }
.devices { flex: 1; min-height: 0; background: #fff; border: 1px solid #7e8a92; }
.devhead { display: flex; align-items: center; gap: 4px; height: 20px; padding: 0 0 2px 2px; background: linear-gradient(#e4f1f8, #bcdbee); }
.devhead h2 { margin: 0 0 0 7px; font-size: 11px; font-weight: normal; color: #333; }
.pl { width: 13px; height: 14px; border-radius: 3px; background: #1a80f0; color: #fff; font-size: 12px; line-height: 14px; text-align: center; }
.devlist { list-style: none; margin: 0; padding: 0; display: grid; grid-auto-rows: 1fr; height: 93px; line-height: 13px; color: #333; }
.devlist li { padding-left: 2px; }
.devlist .sel { background: #3399ff; color: #fff; }

.sheet { flex: 1; min-width: 0; margin-left: 4px; background: #e0e0d0; border: 1px solid #7b868c; overflow: hidden; }
.schematic { display: block; width: 100%; height: 100%; font-family: "Liberation Sans", Arial, sans-serif; }
.wire { fill: none; stroke: #004000; stroke-width: 3; stroke-linejoin: miter; }
.part { fill: #c8c8a8; stroke: #800000; stroke-width: 3; stroke-linejoin: round; }
.part .screen { fill: #000; }
.ref { font-size: 29px; }
.lab { font-size: 19px; }
.end { text-anchor: end; }
.dim { fill: #8c8c86; }
.vt { font-size: 16px; }
.xm { font-size: 12px; }

.status { display: flex; height: 22px; gap: 3px; background: #e4edf3; }
.status .strip { height: 22px; padding-top: 3px; }
.status .st-play { width: 216px; padding-left: 9px; }
.pb { width: 30px; height: 19px; display: flex; align-items: center; justify-content: center; }
.msg { display: flex; align-items: center; gap: 5px; margin-left: 7px; font-size: 9px; }
.small { width: 12px; height: 12px; }
.status .st-text { width: 346px; padding-left: 11px; white-space: nowrap; }
.status .st-coord { flex: 1; justify-content: flex-end; font-size: 10px; }
.cx { width: 499px; }
.cy { width: 57px; }
.th { width: 10px; color: #2a2a9a; }

.t-logo { font: bold 7px "Liberation Sans", sans-serif; text-anchor: middle; }
.t-logo.s { font-size: 5px; }
.t-bom { font: bold 9px "Liberation Serif", serif; text-anchor: middle; fill: #5f6b2a; }
.t-help { font: bold 12px "Liberation Sans", sans-serif; text-anchor: middle; fill: #fff; }
.t-lbl { font: bold 7px "Liberation Sans", sans-serif; text-anchor: middle; fill: #2a5ec8; }
.t-a { font: bold 15px "Liberation Serif", serif; text-anchor: middle; fill: #222; }
.t-s { font: bold 11px "Liberation Sans", sans-serif; text-anchor: middle; fill: #111; }
```
